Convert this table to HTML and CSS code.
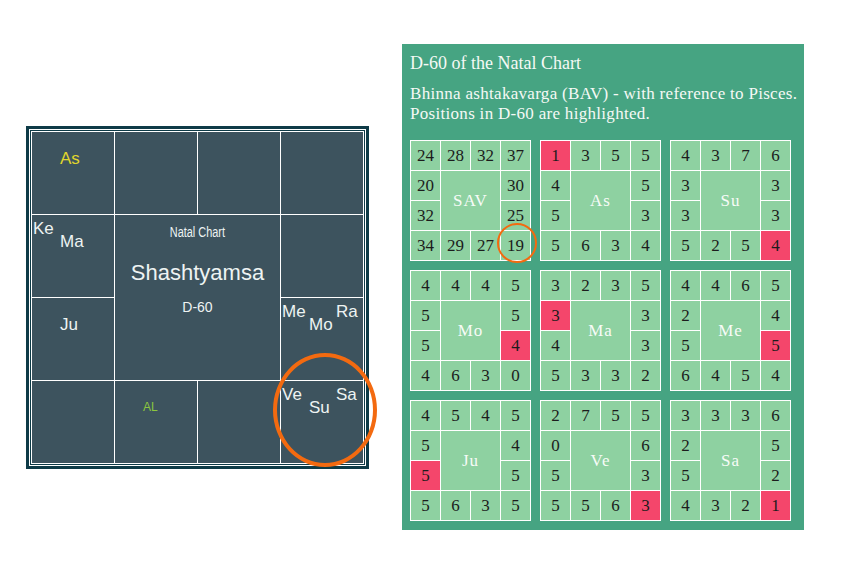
FILE: index.html
```html
<!DOCTYPE html>
<html lang="en">
<head>
<meta charset="utf-8">
<title>D-60 Shashtyamsa</title>
<link rel="stylesheet" href="styles.css">
</head>
<body>
<main class="page">
  <div class="chart-wrap">
    <div class="chart">
      <div class="chart-inner">
        <div class="board">
          <div class="center">
            <div class="c-sub">Natal Chart</div>
            <div class="c-title">Shashtyamsa</div>
            <div class="c-div">D-60</div>
          </div>
          <div class="cell"><span class="s2 asc">As</span></div>
          <div class="cell"></div>
          <div class="cell"></div>
          <div class="cell"></div>
          <div class="cell"><span class="s1">Ke</span><span class="s2">Ma</span></div>
          <div class="cell"></div>
          <div class="cell"><span class="s2">Ju</span></div>
          <div class="cell"><span class="s1">Me</span><span class="s2">Mo</span><span class="s3">Ra</span></div>
          <div class="cell"></div>
          <div class="cell"><span class="s2 al">AL</span></div>
          <div class="cell"></div>
          <div class="cell"><span class="s1">Ve</span><span class="s2">Su</span><span class="s3">Sa</span></div>
        </div>
      </div>
    </div>
    <div class="ring ring-big"></div>
  </div>

  <section class="panel">
    <h1 class="panel-title">D-60 of the Natal Chart</h1>
    <p class="panel-desc">Bhinna ashtakavarga (BAV) - with reference to Pisces.<br>Positions in D-60 are highlighted.</p>
    <div class="boards">
      <div class="bav">
        <div class="bav-label">SAV</div>
        <div class="n">24</div><div class="n">28</div><div class="n">32</div><div class="n">37</div>
        <div class="n">20</div><div class="n">30</div>
        <div class="n">32</div><div class="n">25</div>
        <div class="n">34</div><div class="n">29</div><div class="n">27</div><div class="n">19</div>
        <div class="ring ring-small"></div>
      </div>
      <div class="bav">
        <div class="bav-label">As</div>
        <div class="n hl">1</div><div class="n">3</div><div class="n">5</div><div class="n">5</div>
        <div class="n">4</div><div class="n">5</div>
        <div class="n">5</div><div class="n">3</div>
        <div class="n">5</div><div class="n">6</div><div class="n">3</div><div class="n">4</div>
      </div>
      <div class="bav">
        <div class="bav-label">Su</div>
        <div class="n">4</div><div class="n">3</div><div class="n">7</div><div class="n">6</div>
        <div class="n">3</div><div class="n">3</div>
        <div class="n">3</div><div class="n">3</div>
        <div class="n">5</div><div class="n">2</div><div class="n">5</div><div class="n hl">4</div>
      </div>
      <div class="bav">
        <div class="bav-label">Mo</div>
        <div class="n">4</div><div class="n">4</div><div class="n">4</div><div class="n">5</div>
        <div class="n">5</div><div class="n">5</div>
        <div class="n">5</div><div class="n hl">4</div>
        <div class="n">4</div><div class="n">6</div><div class="n">3</div><div class="n">0</div>
      </div>
      <div class="bav">
        <div class="bav-label">Ma</div>
        <div class="n">3</div><div class="n">2</div><div class="n">3</div><div class="n">5</div>
        <div class="n hl">3</div><div class="n">3</div>
        <div class="n">4</div><div class="n">3</div>
        <div class="n">5</div><div class="n">3</div><div class="n">3</div><div class="n">2</div>
      </div>
      <div class="bav">
        <div class="bav-label">Me</div>
        <div class="n">4</div><div class="n">4</div><div class="n">6</div><div class="n">5</div>
        <div class="n">2</div><div class="n">4</div>
        <div class="n">5</div><div class="n hl">5</div>
        <div class="n">6</div><div class="n">4</div><div class="n">5</div><div class="n">4</div>
      </div>
      <div class="bav">
        <div class="bav-label">Ju</div>
        <div class="n">4</div><div class="n">5</div><div class="n">4</div><div class="n">5</div>
        <div class="n">5</div><div class="n">4</div>
        <div class="n hl">5</div><div class="n">5</div>
        <div class="n">5</div><div class="n">6</div><div class="n">3</div><div class="n">5</div>
      </div>
      <div class="bav">
        <div class="bav-label">Ve</div>
        <div class="n">2</div><div class="n">7</div><div class="n">5</div><div class="n">5</div>
        <div class="n">0</div><div class="n">6</div>
        <div class="n">5</div><div class="n">3</div>
        <div class="n">5</div><div class="n">5</div><div class="n">6</div><div class="n hl">3</div>
      </div>
      <div class="bav">
        <div class="bav-label">Sa</div>
        <div class="n">3</div><div class="n">3</div><div class="n">3</div><div class="n">6</div>
        <div class="n">2</div><div class="n">5</div>
        <div class="n">5</div><div class="n">2</div>
        <div class="n">4</div><div class="n">3</div><div class="n">2</div><div class="n hl">1</div>
      </div>
    </div>
  </section>
</main>
</body>
</html>
```
FILE: styles.css
```css
html, body {
  margin: 0;
  padding: 0;
  background: #ffffff;
}

.page {
  display: flex;
  align-items: flex-start;
  gap: 33px;
  padding: 44px 0 0 26px;
}

/* ---------- Left chart ---------- */
.chart-wrap {
  position: relative;
  margin-top: 82px;
}

.chart {
  background: #0e3b47;
  padding: 3px;
}

.chart-inner {
  border: 1px solid #ffffff;
  padding: 1px;
}

.board {
  display: grid;
  grid-template-columns: repeat(4, 82px);
  grid-template-rows: repeat(4, 82px);
  gap: 1px;
  background: #ffffff;
  border: 1px solid #ffffff;
  font-family: "Liberation Sans", Arial, sans-serif;
  color: #eef3f3;
}

.cell {
  background: #3d535e;
  display: grid;
  grid-template-columns: repeat(3, 27px);
  align-items: start;
  align-content: start;
  padding: 4px 0 0 1px;
  font-size: 17px;
  line-height: 19px;
}

.s1 { grid-column: 1; grid-row: 1; }
.s2 { grid-column: 2; grid-row: 1; margin-top: 13px; }
.s3 { grid-column: 3; grid-row: 1; }

.asc { color: #e0d62c; }
.al {
  color: #8cc63f;
  font-size: 12px;
  line-height: 14px;
  margin-top: 15px;
}

.center {
  grid-column: 2 / 4;
  grid-row: 2 / 4;
  background: #3d535e;
  display: flex;
  flex-direction: column;
  align-items: center;
  padding-top: 9px;
}

.c-sub {
  font-size: 14px;
  line-height: 16px;
  transform: scaleX(0.78);
}

.c-title {
  font-size: 22px;
  line-height: 25px;
  margin-top: 20px;
}

.c-div {
  font-size: 14px;
  line-height: 16px;
  margin-top: 14px;
}

.ring {
  position: absolute;
  border-style: solid;
  border-color: #f36a10;
  border-radius: 50%;
  box-sizing: border-box;
  pointer-events: none;
}

.ring-big {
  left: 247px;
  top: 227px;
  width: 104px;
  height: 114px;
  border-width: 4px;
}

/* ---------- Right panel ---------- */
.panel {
  width: 402px;
  height: 486px;
  box-sizing: border-box;
  background: #46a482;
  padding: 9px 8px 0 8px;
  color: #f5f9f5;
  font-family: "Liberation Serif", "Times New Roman", serif;
}

.panel-title {
  margin: 0;
  font-size: 18px;
  font-weight: normal;
  line-height: 20px;
}

.panel-desc {
  margin: 11px 0 0;
  font-size: 17px;
  line-height: 20px;
  letter-spacing: 0.3px;
  white-space: nowrap;
}

.boards {
  margin-top: 16px;
  display: grid;
  grid-template-columns: repeat(3, 121px);
  gap: 9px;
}

.bav {
  position: relative;
  display: grid;
  grid-template-columns: repeat(4, 29px);
  grid-template-rows: repeat(4, 29px);
  gap: 1px;
  padding: 1px;
  background: #ffffff;
}

.n {
  background: #8ed1a1;
  color: #1c1c1c;
  font-size: 17px;
  line-height: 29px;
  text-align: center;
}

.n.hl {
  background: #f4466b;
}

.bav-label {
  grid-column: 2 / 4;
  grid-row: 2 / 4;
  background: #8ed1a1;
  color: #f7fbf7;
  font-size: 17px;
  letter-spacing: 1px;
  display: flex;
  align-items: center;
  justify-content: center;
}

.ring-small {
  left: 87px;
  top: 83px;
  width: 40px;
  height: 40px;
  border-width: 2px;
}
```
